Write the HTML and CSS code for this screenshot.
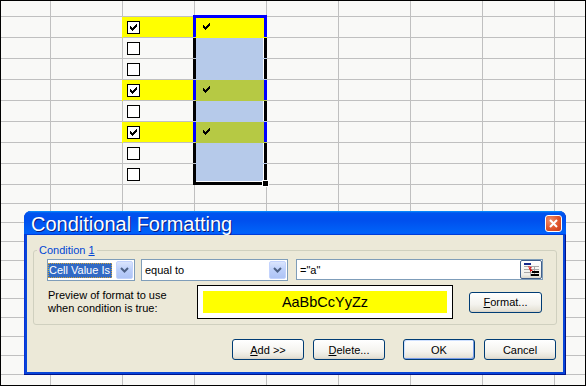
FILE: index.html
```html
<!DOCTYPE html>
<html lang="en">
<head>
    <meta charset="UTF-8">
    <title>Conditional Formatting</title>
    <link rel="stylesheet" href="styles.css">
</head>
<body>

    <!-- shared glyphs -->
    <svg class="defs" width="0" height="0" aria-hidden="true">
        <symbol id="tick" viewBox="0 0 7 7">
            <path d="M6 0h1v1h-1z M5 1h2v1h-2z M0 2h1v1h-1z M4 2h3v1h-3z M0 3h2v1h-2z M3 3h3v1h-3z M0 4h5v1h-5z M1 5h3v1h-3z M2 6h1v1h-1z"/>
        </symbol>
        <symbol id="chev" viewBox="0 0 9 6">
            <path d="M1 1l3.5 3.5L8 1" fill="none" stroke="#4d6185" stroke-width="2"/>
        </symbol>
    </svg>

    <div class="sheet">
        <div class="row head"><span></span><span></span><span></span><span></span><span></span><span></span><span></span><span></span><span></span></div>

        <div class="row tall"><span></span><span></span><span class="chk on"><i class="box"><svg width="7" height="7"><use href="#tick"/></svg></i></span><span class="sel act first"><svg width="7" height="7"><use href="#tick"/></svg></span><span></span><span></span><span></span><span></span><span></span></div>
        <div class="row tall"><span></span><span></span><span class="chk"><i class="box"></i></span><span class="sel"></span><span></span><span></span><span></span><span></span><span></span></div>
        <div class="row tall"><span></span><span></span><span class="chk"><i class="box"></i></span><span class="sel"></span><span></span><span></span><span></span><span></span><span></span></div>
        <div class="row tall"><span></span><span></span><span class="chk on"><i class="box"><svg width="7" height="7"><use href="#tick"/></svg></i></span><span class="sel on"><svg width="7" height="7"><use href="#tick"/></svg></span><span></span><span></span><span></span><span></span><span></span></div>
        <div class="row tall"><span></span><span></span><span class="chk"><i class="box"></i></span><span class="sel"></span><span></span><span></span><span></span><span></span><span></span></div>
        <div class="row tall"><span></span><span></span><span class="chk on"><i class="box"><svg width="7" height="7"><use href="#tick"/></svg></i></span><span class="sel on"><svg width="7" height="7"><use href="#tick"/></svg></span><span></span><span></span><span></span><span></span><span></span></div>
        <div class="row tall"><span></span><span></span><span class="chk"><i class="box"></i></span><span class="sel"></span><span></span><span></span><span></span><span></span><span></span></div>
        <div class="row tall"><span></span><span></span><span class="chk"><i class="box"></i></span><span class="sel last"></span><span></span><span></span><span></span><span></span><span></span></div>

        <div class="row"><span></span><span></span><span></span><span></span><span></span><span></span><span></span><span></span><span></span></div>
        <div class="row"><span></span><span></span><span></span><span></span><span></span><span></span><span></span><span></span><span></span></div>
        <div class="row"><span></span><span></span><span></span><span></span><span></span><span></span><span></span><span></span><span></span></div>
        <div class="row"><span></span><span></span><span></span><span></span><span></span><span></span><span></span><span></span><span></span></div>
        <div class="row"><span></span><span></span><span></span><span></span><span></span><span></span><span></span><span></span><span></span></div>
        <div class="row"><span></span><span></span><span></span><span></span><span></span><span></span><span></span><span></span><span></span></div>
        <div class="row"><span></span><span></span><span></span><span></span><span></span><span></span><span></span><span></span><span></span></div>
        <div class="row"><span></span><span></span><span></span><span></span><span></span><span></span><span></span><span></span><span></span></div>
        <div class="row"><span></span><span></span><span></span><span></span><span></span><span></span><span></span><span></span><span></span></div>
        <div class="row"><span></span><span></span><span></span><span></span><span></span><span></span><span></span><span></span><span></span></div>
        <div class="row end"><span></span><span></span><span></span><span></span><span></span><span></span><span></span><span></span><span></span></div>

        <!-- Conditional Formatting dialog -->
        <div class="dialog">
            <div class="titlebar">
                <span class="title">Conditional Formatting</span>
                <span class="close">
                    <svg width="9" height="9" viewBox="0 0 9 9"><path d="M1 1l7 7M8 1l-7 7" stroke="#fff" stroke-width="2"/></svg>
                </span>
            </div>

            <div class="dlg-body">
                <fieldset class="cond">
                    <legend>Condition <u>1</u></legend>

                    <div class="cond-line">
                        <div class="combo kind">
                            <span class="val"><span class="hl">Cell Value Is</span></span>
                            <span class="drop"><svg width="9" height="6"><use href="#chev"/></svg></span>
                        </div>
                        <div class="combo op">
                            <span class="val">equal to</span>
                            <span class="drop"><svg width="9" height="6"><use href="#chev"/></svg></span>
                        </div>
                        <div class="combo field">
                            <span class="val">="a"</span>
                            <span class="refedit">
                                <svg width="15" height="13" viewBox="0 0 15 13">
                                    <path d="M0 3.5h15M0 6.5h15M0 9.5h15M6.5 3v10M10.5 3v10" stroke="#a8a8a8" stroke-width="1"/>
                                    <rect x="0" y="0" width="7" height="2" fill="#14288c"/>
                                    <rect x="8" y="8" width="3" height="2" fill="#000"/>
                                    <rect x="11" y="8" width="4" height="2" fill="#000"/>
                                    <rect x="7" y="11" width="8" height="2" fill="#000"/>
                                    <path d="M4 3l5 5-2 0 0 2z" fill="#e01010"/>
                                    <path d="M4 3l4 1.5-1 1z" fill="#e01010"/>
                                </svg>
                            </span>
                        </div>
                    </div>

                    <div class="preview-line">
                        <div class="preview-label">Preview of format to use<br>when condition is true:</div>
                        <div class="preview"><div class="sample">AaBbCcYyZz</div></div>
                        <button class="btn fmt"><u>F</u>ormat...</button>
                    </div>
                </fieldset>

                <div class="actions">
                    <button class="btn"><u>A</u>dd &gt;&gt;</button>
                    <button class="btn"><u>D</u>elete...</button>
                    <button class="btn default">OK</button>
                    <button class="btn">Cancel</button>
                </div>
            </div>
        </div>
    </div>

</body>
</html>
```

FILE: styles.css
```css
/* page */
body {
    margin: 0;
    font-family: "Liberation Sans", Arial, sans-serif;
}

.defs {
    position: absolute;
    width: 0;
    height: 0;
}

/* worksheet */
.sheet {
    position: relative;
    width: 586px;
    height: 386px;
    box-sizing: border-box;
    border: 1px solid #000;
    background: #f9f9f7;
    display: flex;
    flex-direction: column;
    overflow: hidden;
}

.row {
    display: grid;
    grid-template-columns: 50px repeat(7, 72px) 1fr;
    height: 19px;
    flex: none;
}

.row.head {
    height: 16px;
}

.row.tall {
    height: 21px;
}

.row.end {
    flex: 1;
}

.row > span {
    box-sizing: border-box;
    border-right: 1px solid #c0c0c0;
    border-bottom: 1px solid #c0c0c0;
    display: flex;
    align-items: center;
}

.row.end > span {
    border-bottom: none;
}

.row > span:last-child {
    border-right: none;
}

/* checkbox column */
.row > .chk {
    padding: 1px 0 0 4px;
}

.row > .chk.on {
    background: #ff0;
    box-shadow: -1px 0 0 #ff0;
}

.box {
    width: 13px;
    height: 13px;
    box-sizing: border-box;
    border: 1px solid #000;
    background: #fff;
    display: flex;
    align-items: center;
    justify-content: center;
}

/* selected range */
.row > .sel {
    position: relative;
    align-items: flex-start;
    padding: 6px 0 0 8px;
    background: #b6caea;
    border-bottom-color: #b6caea;
}

.row > .sel.on {
    background: #b6c944;
    border-bottom-color: #b6c944;
}

.row > .sel.act {
    background: #ff0;
    border-bottom-color: #ff0;
}

.sel::after {
    content: "";
    position: absolute;
    top: 0;
    bottom: 0;
    left: -2px;
    right: -1px;
    border-left: 3px solid #000;
    border-right: 3px solid #000;
    box-shadow: inset -1px 0 0 #fff;
}

.sel.on::after,
.sel.act::after {
    border-left-color: #00f;
    border-right-color: #00f;
    box-shadow: none;
}

.sel.first::after {
    top: -2px;
    border-top: 3px solid #00f;
}

.sel.last::after {
    bottom: -1px;
    border-bottom: 3px solid #000;
    box-shadow: inset -1px -1px 0 #fff;
}

.sel.last::before {
    content: "";
    position: absolute;
    right: -3px;
    bottom: -3px;
    width: 5px;
    height: 5px;
    background: #000;
    border: 1px solid #fff;
    z-index: 1;
}

/* dialog window */
.dialog {
    position: absolute;
    left: 23px;
    top: 210px;
    width: 542px;
    height: 164px;
    box-sizing: border-box;
    padding: 0 3px 3px;
    display: flex;
    flex-direction: column;
    background: #0845d8;
    border-radius: 7px 7px 0 0;
    box-shadow: inset -1px -1px #00138c, inset 1px 1px #0831d9;
}

.titlebar {
    margin: 0 -3px;
    height: 24px;
    padding: 0 4px 0 7px;
    display: flex;
    align-items: center;
    justify-content: space-between;
    border-radius: 7px 7px 0 0;
    background: linear-gradient(180deg, #0997ff, #0053ee 8%, #0050ee 40%, #0062f8 88%, #0060fc 93%, #005bff 95%, #003dd7 96%, #003dd7);
}

.title {
    color: #fff;
    font-size: 20px;
    line-height: 24px;
    padding-top: 1px;
    text-shadow: 1px 1px #0a1a7a;
}

.close {
    width: 17px;
    height: 17px;
    box-sizing: border-box;
    border: 1px solid #fff;
    border-radius: 3px;
    background: radial-gradient(circle at 30% 30%, #f0916d, #e0552b 55%, #c5391a);
    display: flex;
    align-items: center;
    justify-content: center;
}

.dlg-body {
    flex: 1;
    background: #ece9d8;
    font-size: 11px;
    color: #000;
}

/* condition group */
.cond {
    margin: 9px 6px 0 6px;
    padding: 2px 6px 5px 3px;
    border: 1px solid #d0d0bf;
    border-radius: 3px;
}

.cond legend {
    padding: 0 2px;
    line-height: 13px;
    color: #0046d5;
}

.cond-line {
    display: flex;
    align-items: flex-start;
    padding-left: 10px;
}

.combo {
    box-sizing: border-box;
    height: 22px;
    padding: 1px 1px 1px 0;
    border: 1px solid #7f9db9;
    background: #fff;
    display: flex;
    align-items: center;
}

.combo.kind {
    width: 88px;
}

.combo.op {
    width: 147px;
    margin-left: 6px;
}

.combo.field {
    width: 247px;
    height: 21px;
    margin-left: 8px;
    padding: 0;
}

.val {
    flex: 1;
    padding-left: 3px;
    white-space: nowrap;
}

.kind .val {
    padding-left: 0;
}

.hl {
    display: inline-block;
    padding: 1px 2px 1px 1px;
    line-height: 13px;
    background: #316ac5;
    color: #fff;
    outline: 1px dotted #cea23a;
    outline-offset: -1px;
}

.drop {
    width: 17px;
    height: 18px;
    box-sizing: border-box;
    border: 1px solid #c3d3fd;
    border-radius: 2px;
    background: linear-gradient(180deg, #dbe5fd, #bccffa 50%, #aec4f6);
    display: flex;
    align-items: center;
    justify-content: center;
}

.refedit {
    width: 22px;
    height: 19px;
    box-sizing: border-box;
    border: 1px solid #41608b;
    border-radius: 2px;
    background: linear-gradient(180deg, #fff, #f0efe9 80%, #dcd8cc);
    display: flex;
    align-items: center;
    justify-content: center;
}

/* preview */
.preview-line {
    margin-top: 4px;
    padding-left: 10px;
    display: flex;
    align-items: center;
}

.preview-label {
    width: 150px;
    box-sizing: border-box;
    padding-left: 1px;
    line-height: 13px;
}

.preview {
    width: 256px;
    height: 34px;
    box-sizing: border-box;
    padding: 5px;
    border: 1px solid #000;
    background: #fff;
}

.sample {
    height: 22px;
    line-height: 22px;
    background: #ff0;
    text-align: center;
    font-size: 14.5px;
}

/* buttons */
.btn {
    width: 72px;
    height: 21px;
    box-sizing: border-box;
    padding: 0;
    border: 1px solid #003c74;
    border-radius: 3px;
    background: linear-gradient(180deg, #fff, #f4f3ee 60%, #e6e3d8 90%, #d6d0c5);
    font-family: "Liberation Sans", Arial, sans-serif;
    font-size: 11px;
    color: #000;
}

.btn.fmt {
    width: 73px;
    margin-left: 16px;
}

.btn.default {
    margin-left: 9px;
    box-shadow: inset -1px -1px #7b9de8, inset 1px 1px #cee0ff;
}

.actions {
    margin-top: 14px;
    padding-right: 7px;
    display: flex;
    justify-content: flex-end;
    gap: 9px;
}
```
